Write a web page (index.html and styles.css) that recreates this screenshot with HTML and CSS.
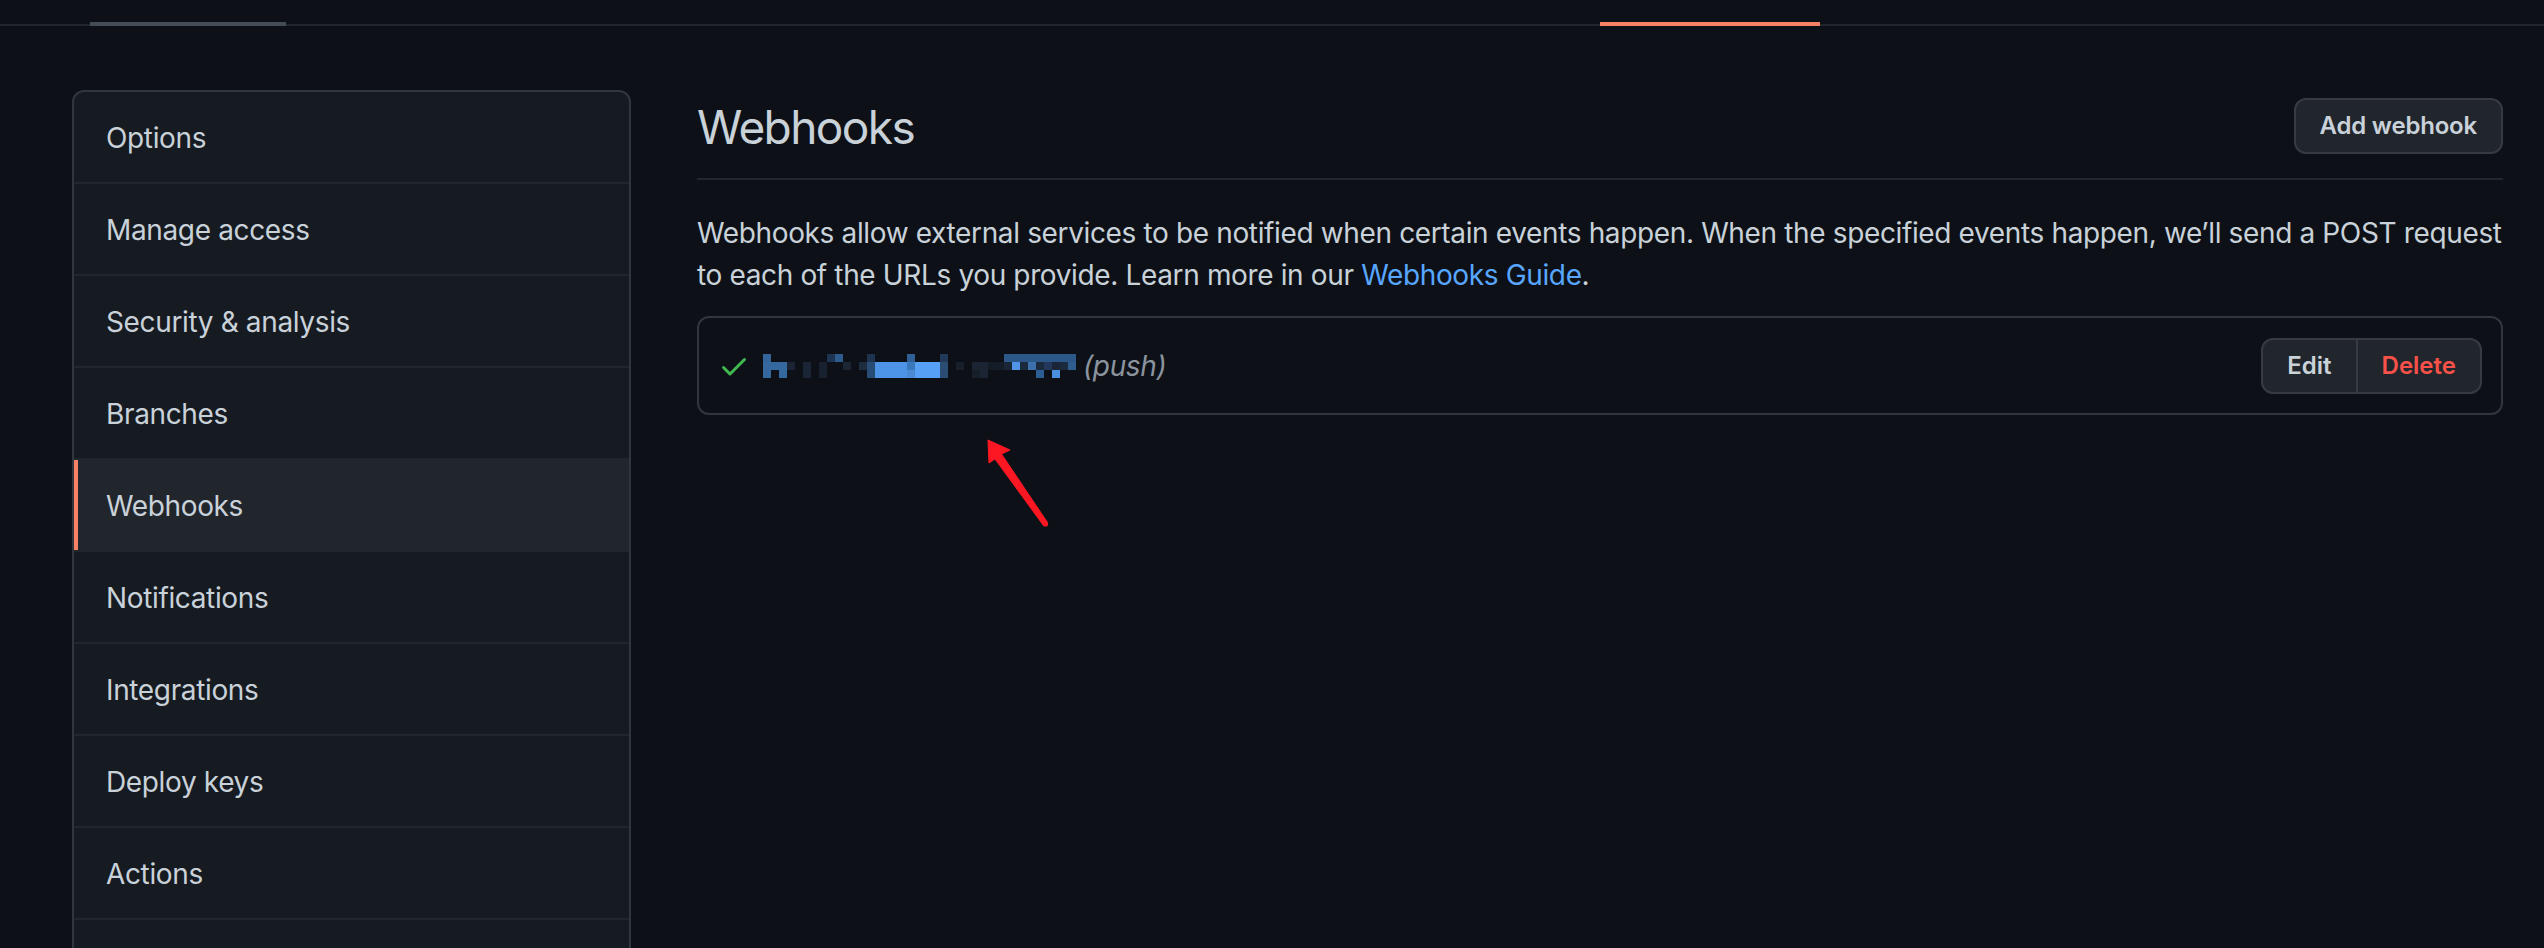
FILE: index.html
```html
<!DOCTYPE html>
<html lang="en">
<head>
<meta charset="utf-8">
<title>Webhooks</title>
<link rel="stylesheet" href="styles.css">
</head>
<body>
<nav class="tabs">
  <span class="tab tab-code"></span>
  <span class="tab tab-settings"></span>
</nav>
<div class="layout">
  <aside class="menu">
    <a class="menu-item">Options</a>
    <a class="menu-item">Manage access</a>
    <a class="menu-item">Security &amp; analysis</a>
    <a class="menu-item">Branches</a>
    <a class="menu-item selected">Webhooks</a>
    <a class="menu-item">Notifications</a>
    <a class="menu-item">Integrations</a>
    <a class="menu-item">Deploy keys</a>
    <a class="menu-item">Actions</a>
    <a class="menu-item">Environments</a>
  </aside>
  <main class="content">
    <div class="subhead">
      <h2 class="subhead-title">Webhooks</h2>
      <button class="btn">Add webhook</button>
    </div>
    <p class="intro">Webhooks allow external services to be notified when certain events happen. When the specified events happen, we’ll send a POST request<br>to each of the URLs you provide. Learn more in our <a class="link">Webhooks Guide</a>.</p>
    <div class="hook-list">
      <div class="hook">
        <svg class="check" viewBox="0 0 16 16" width="32" height="32"><path fill="#3fb950" d="M13.78 4.22a.75.75 0 010 1.06l-7.25 7.25a.75.75 0 01-1.06 0L2.22 9.28a.75.75 0 011.06-1.06L6 10.94l6.72-6.72a.75.75 0 011.06 0z"/></svg>
        <svg class="redacted" viewBox="0 0 39 3" width="313" height="24" preserveAspectRatio="none" shape-rendering="crispEdges">
          <rect x="0" y="0" width="1" height="1" fill="#34649a"/>
          <rect x="8" y="0" width="1" height="1" fill="#1d3553"/>
          <rect x="9" y="0" width="1" height="1" fill="#2e5b8e"/>
          <rect x="13" y="0" width="1" height="1" fill="#1e3350"/>
          <rect x="18" y="0" width="1" height="1" fill="#2f5f95"/>
          <rect x="22" y="0" width="1" height="1" fill="#213a58"/>
          <rect x="30" y="0" width="9" height="1" fill="#2b5889"/>
          <rect x="0" y="1" width="3" height="1" fill="#3668a0"/>
          <rect x="3" y="1" width="1" height="1" fill="#1a2434"/>
          <rect x="5" y="1" width="1" height="1" fill="#1a2535"/>
          <rect x="7" y="1" width="1" height="1" fill="#18212f"/>
          <rect x="10" y="1" width="1" height="1" fill="#1b2534"/>
          <rect x="12" y="1" width="1" height="1" fill="#1e2c40"/>
          <rect x="13" y="1" width="1" height="1" fill="#274c75"/>
          <rect x="14" y="1" width="4" height="1" fill="#4d94e6"/>
          <rect x="18" y="1" width="1" height="1" fill="#3b77bb"/>
          <rect x="19" y="1" width="3" height="1" fill="#56a0f5"/>
          <rect x="22" y="1" width="1" height="1" fill="#2b4d73"/>
          <rect x="24" y="1" width="1" height="1" fill="#161e2a"/>
          <rect x="26" y="1" width="2" height="1" fill="#1a2433"/>
          <rect x="28" y="1" width="2" height="1" fill="#141c28"/>
          <rect x="30" y="1" width="1" height="1" fill="#1a2638"/>
          <rect x="31" y="1" width="1" height="1" fill="#4f94e6"/>
          <rect x="32" y="1" width="1" height="1" fill="#1c2a3d"/>
          <rect x="33" y="1" width="1" height="1" fill="#3a70ad"/>
          <rect x="34" y="1" width="1" height="1" fill="#1c2a3d"/>
          <rect x="35" y="1" width="1" height="1" fill="#22375a"/>
          <rect x="36" y="1" width="1" height="1" fill="#1a2638"/>
          <rect x="37" y="1" width="1" height="1" fill="#1c2a3d"/>
          <rect x="38" y="1" width="1" height="1" fill="#2f5d90"/>
          <rect x="0" y="2" width="1" height="1" fill="#3668a0"/>
          <rect x="2" y="2" width="1" height="1" fill="#3668a0"/>
          <rect x="5" y="2" width="1" height="1" fill="#1a2535"/>
          <rect x="7" y="2" width="1" height="1" fill="#18212f"/>
          <rect x="13" y="2" width="1" height="1" fill="#274c75"/>
          <rect x="14" y="2" width="4" height="1" fill="#4d94e6"/>
          <rect x="18" y="2" width="1" height="1" fill="#4a8ad6"/>
          <rect x="19" y="2" width="3" height="1" fill="#56a0f5"/>
          <rect x="22" y="2" width="1" height="1" fill="#2b4d73"/>
          <rect x="26" y="2" width="1" height="1" fill="#161e2a"/>
          <rect x="27" y="2" width="1" height="1" fill="#1a2433"/>
          <rect x="34" y="2" width="1" height="1" fill="#2d5d95"/>
          <rect x="36" y="2" width="1" height="1" fill="#4a8ee0"/>
        </svg>
        <span class="hook-events">(push)</span>
        <div class="btn-group">
          <button class="btn btn-group-item">Edit</button>
          <button class="btn btn-group-item btn-danger">Delete</button>
        </div>
      </div>
    </div>
  </main>
</div>
<svg class="annotation" width="2544" height="948" viewBox="0 0 2544 948">
  <polygon fill="#fc1723" stroke="#fc1723" stroke-width="1" stroke-linejoin="round" points="988,440 1010,450 1001.5,454 1047.6,522.6 1043.4,525.4 995,459 989,463"/>
  <circle cx="1045.5" cy="524" r="2.6" fill="#fc1723"/>
</svg>
</body>
</html>
```

FILE: styles.css
```css
html, body {
  margin: 0;
  padding: 0;
}

body {
  background: #0d1117;
  color: #c9d1d9;
  font-family: Inter, "Noto Sans", "Liberation Sans", sans-serif;
  width: 2544px;
  height: 948px;
  overflow: hidden;
  position: relative;
}

.tabs {
  display: flex;
  align-items: flex-end;
  height: 26px;
  box-shadow: inset 0 -2px 0 #21262d;
}

.tab {
  display: block;
  height: 4px;
}

.tab-code {
  margin-left: 90px;
  width: 196px;
  background: #444c56;
}

.tab-settings {
  margin-left: 1314px;
  width: 220px;
  background: #f78166;
}

.layout {
  display: flex;
  gap: 66px;
  padding: 64px 41px 0 72px;
}

.menu {
  flex: none;
  width: 555px;
  border: 2px solid #30363d;
  border-radius: 12px;
  background: #161b22;
  display: flex;
  flex-direction: column;
}

.menu-item {
  display: block;
  padding: 25px 32px 23px;
  font-size: 28px;
  line-height: 42px;
  letter-spacing: -0.36px;
  color: #c9d1d9;
  border-top: 2px solid #21262d;
}

.menu-item:first-child {
  border-top: 0;
  border-radius: 10px 10px 0 0;
}

.menu-item.selected {
  background: #21262d;
  box-shadow: inset 4px 0 0 #f78166;
}

.content {
  flex: 1;
  min-width: 0;
}

.subhead {
  display: flex;
  align-items: center;
  justify-content: space-between;
  padding-bottom: 16px;
  border-bottom: 2px solid #21262d;
}

.subhead-title {
  margin: 0;
  font-size: 46px;
  font-weight: 400;
  line-height: 72px;
  letter-spacing: -1.6px;
  color: #c9d1d9;
  position: relative;
  top: 1px;
}

.btn {
  font-family: inherit;
  font-size: 24px;
  font-weight: 600;
  line-height: 40px;
  padding: 6px 24px;
  letter-spacing: -0.2px;
  color: #c9d1d9;
  background: #21262d;
  border: 2px solid #363b42;
  border-radius: 12px;
  cursor: pointer;
}

.intro {
  margin: 32px 0 20px;
  font-size: 28px;
  line-height: 42px;
  letter-spacing: -0.36px;
  white-space: nowrap;
}

.link {
  color: #58a6ff;
}

.hook-list {
  border: 2px solid #30363d;
  border-radius: 12px;
}

.hook {
  display: flex;
  align-items: center;
  height: 95px;
  padding: 0 19px 0 19px;
}

.check {
  flex: none;
  margin-right: 13px;
}

.redacted {
  flex: none;
  display: block;
}

.hook-events {
  margin-left: 7px;
  font-size: 28px;
  font-style: italic;
  letter-spacing: -0.36px;
  color: #8b949e;
}

.btn-group {
  margin-left: auto;
  display: flex;
}

.btn-group-item {
  border-radius: 0;
  padding: 6px 24px;
  letter-spacing: 0;
}

.btn-group-item:first-child {
  border-radius: 12px 0 0 12px;
}

.btn-group-item + .btn-group-item {
  margin-left: -2px;
  border-radius: 0 12px 12px 0;
}

.btn-danger {
  color: #f85149;
}

.annotation {
  position: absolute;
  left: 0;
  top: 0;
  pointer-events: none;
}
```
